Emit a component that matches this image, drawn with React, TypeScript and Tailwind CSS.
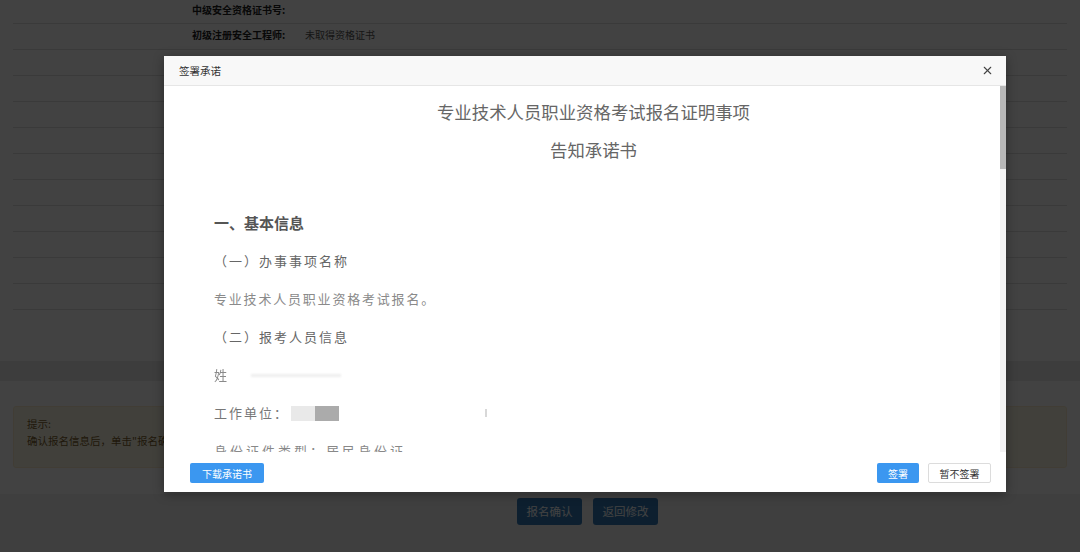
import { X } from "lucide-react";

const rowLabels: [string, string][] = [
  ["中级安全资格证书号:", ""],
  ["初级注册安全工程师:", "未取得资格证书"],
  ["", ""],
  ["", ""],
  ["", ""],
  ["", ""],
  ["", ""],
  ["", ""],
  ["", ""],
  ["", ""],
  ["", ""],
  ["", ""],
];

export default function App() {
  return (
    <div className="relative w-[1080px] h-[552px] overflow-hidden bg-white font-['Noto_Sans_CJK_SC','Noto_Sans',sans-serif]">
      {/* underlying page */}
      <div className="flex flex-col h-full">
        <div className="mx-[13px] flex flex-col">
          {rowLabels.map(([label, value], i) => (
            <div
              key={i}
              className={`flex items-center pb-[5px] border-b border-[#dedede] ${i === 0 ? "h-[24px]" : "h-[26px]"}`}
            >
              <span className="ml-[179px] w-[113px] text-[10px] font-bold text-[#222]">{label}</span>
              <span className="text-[10px] text-[#555]">{value}</span>
            </div>
          ))}
        </div>
        <div className="h-[51px] shrink-0" />
        <div className="h-[20px] shrink-0 bg-[#ececec]" />
        <div className="h-[113px] shrink-0 pt-[25px] px-[13px]">
          <div className="h-[62px] rounded-[3px] bg-[#fcf8e3] border border-[#faebcc] px-[13px] pt-[8px] text-[10.5px] leading-[17px] text-[#7a5f2f]">
            <div>提示:</div>
            <div>确认报名信息后，单击"报名确认"</div>
          </div>
        </div>
        <div className="flex-1 bg-[#f2f2f2] flex items-start pt-[4px] pl-[517px] gap-[11px]">
          <div className="h-[27px] w-[65px] rounded-[3px] bg-[#337ab7] text-white text-[11.5px] flex items-center justify-center">报名确认</div>
          <div className="h-[27px] w-[65px] rounded-[3px] bg-[#337ab7] text-white text-[11.5px] flex items-center justify-center">返回修改</div>
        </div>
      </div>

      {/* overlay */}
      <div className="absolute inset-0 bg-black/[0.74]" />

      {/* modal */}
      <div className="absolute left-[164px] top-[56px] w-[842px] h-[436px] bg-white flex flex-col shadow-[0_2px_10px_rgba(0,0,0,0.35)]">
        <div className="h-[30px] shrink-0 bg-[#f8f8f8] border-b border-[#e6e6e6] flex items-center justify-between pl-[15px] pr-[12px]">
          <span className="text-[10.5px] text-[#333]">签署承诺</span>
          <X size={13} strokeWidth={2} className="text-[#444]" />
        </div>
        <div className="flex-1 min-h-0 flex overflow-hidden">
          <div className="flex-1 pl-[50px] pr-[27px] pt-[7px] overflow-hidden">
            <div className="text-center text-[17.4px] leading-[38px] text-[#666]">
              <div>专业技术人员职业资格考试报名证明事项</div>
              <div>告知承诺书</div>
            </div>
            <div className="mt-[35px] text-[15px] leading-[38px] font-bold text-[#555]">一、基本信息</div>
            <div className="text-[13px] leading-[38px] tracking-[2px] text-[#666]">（一）办事事项名称</div>
            <div className="text-[13px] leading-[38px] tracking-[1.8px] text-[#8a8a8a]">专业技术人员职业资格考试报名。</div>
            <div className="text-[13px] leading-[38px] tracking-[2px] text-[#666]">（二）报考人员信息</div>
            <div className="h-[38px] text-[13px] tracking-[2px] flex items-center">
              <span className="text-[#8a8a8a] blur-[0.4px]">姓</span>
              <span className="ml-[22px] h-[3px] w-[90px] bg-[#eeeeee] blur-[1px]" />
            </div>
            <div className="h-[38px] text-[13px] tracking-[2px] text-[#777] flex items-center">
              <span>工作单位：</span>
              <span className="ml-[2px] h-[15px] w-[24px] bg-[#e9e9e9] blur-[0.5px]" />
              <span className="h-[15px] w-[24px] bg-[#ababab]" />
              <span className="ml-[146px] h-[8px] w-[2px] bg-[#d8d8d8]" />
            </div>
            <div className="text-[13px] leading-[38px] tracking-[3px] text-[#888]">身份证件类型：居民身份证</div>
          </div>
          <div className="w-[6px] shrink-0 bg-[#f3f3f3] flex flex-col">
            <div className="h-[83px] bg-[#b8b8b8]" />
          </div>
        </div>
        <div className="h-[40px] shrink-0 flex items-start justify-between pt-[11px] pl-[26px] pr-[15px]">
          <div className="h-[20px] w-[74px] rounded-[2px] bg-[#3b97f0] text-white text-[10px] flex items-center justify-center">下载承诺书</div>
          <div className="flex gap-[9px]">
            <div className="h-[20px] w-[42px] rounded-[2px] bg-[#3b97f0] text-white text-[10px] flex items-center justify-center">签署</div>
            <div className="h-[20px] w-[63px] rounded-[2px] bg-white border border-[#dcdcdc] text-[#333] text-[10px] flex items-center justify-center">暂不签署</div>
          </div>
        </div>
      </div>
    </div>
  );
}
